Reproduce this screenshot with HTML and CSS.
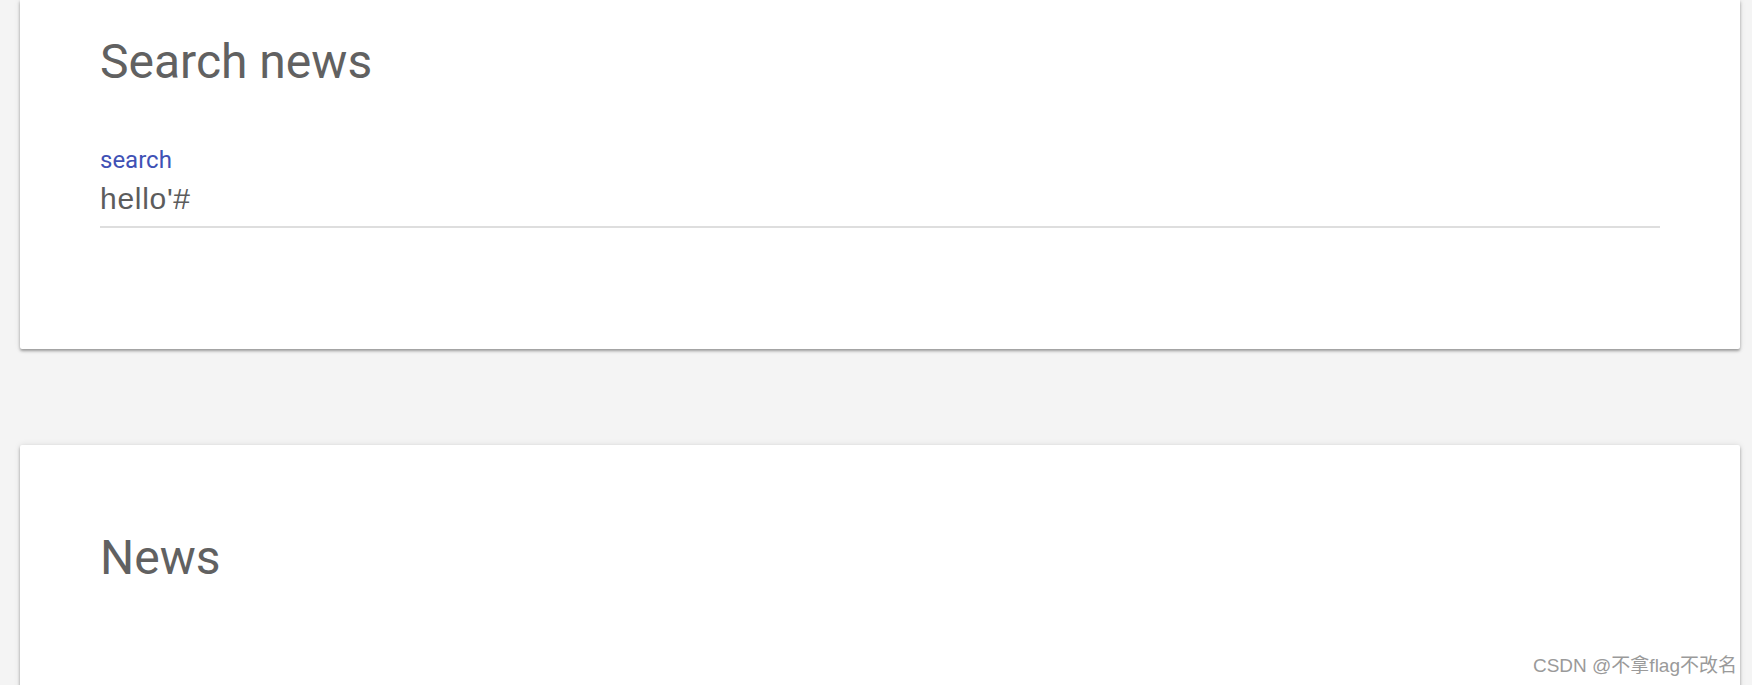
FILE: index.html
```html
<!DOCTYPE html>
<html lang="en">
<head>
<meta charset="utf-8">
<title>Search news</title>
<link rel="stylesheet" href="styles.css">
</head>
<body>
<main class="page">
  <section class="card card-search">
    <h1 class="card-title">Search news</h1>
    <div class="field">
      <label class="field-label" for="q">search</label>
      <div class="field-value" id="q">hello'#</div>
    </div>
  </section>
  <section class="card card-news">
    <h1 class="card-title">News</h1>
  </section>
</main>
<div class="watermark">CSDN @不拿flag不改名</div>
</body>
</html>
```
FILE: styles.css
```css
html, body {
  margin: 0;
  padding: 0;
  height: 100%;
  overflow: hidden;
}
body {
  background: #f4f4f4;
  font-family: Roboto, "Noto Sans", sans-serif;
}
.page {
  display: flex;
  flex-direction: column;
  gap: 96px;
  padding: 0 12px 0 20px;
}
.card {
  background: #fff;
  border-radius: 2px;
  box-shadow: 0 2px 3px rgba(0,0,0,0.34), 0 0 6px rgba(0,0,0,0.10);
  padding: 0 80px;
}
.card-search {
  padding-top: 33px;
  padding-bottom: 121px;
  border-radius: 0 0 2px 2px;
}
.card-news {
  padding-top: 84px;
  height: 400px;
}
.card-title {
  margin: 0;
  font-weight: 400;
  font-size: 48px;
  line-height: 58px;
  color: #616161;
}
.field {
  margin-top: 57px;
  display: flex;
  flex-direction: column;
  gap: 10px;
}
.field-label {
  font-size: 24px;
  line-height: 24px;
  color: #3f51b5;
}
.field-value {
  font-family: "Liberation Sans", Arial, sans-serif;
  font-size: 30px;
  line-height: 34px;
  letter-spacing: 0.7px;
  color: #5c5c5c;
  padding-bottom: 10px;
  border-bottom: 2px solid #dedede;
}
.watermark {
  position: absolute;
  right: 15px;
  bottom: 8px;
  font-family: "Liberation Sans", "Noto Sans CJK SC", sans-serif;
  font-size: 19px;
  line-height: 22px;
  color: #9a9a9a;
}
```
